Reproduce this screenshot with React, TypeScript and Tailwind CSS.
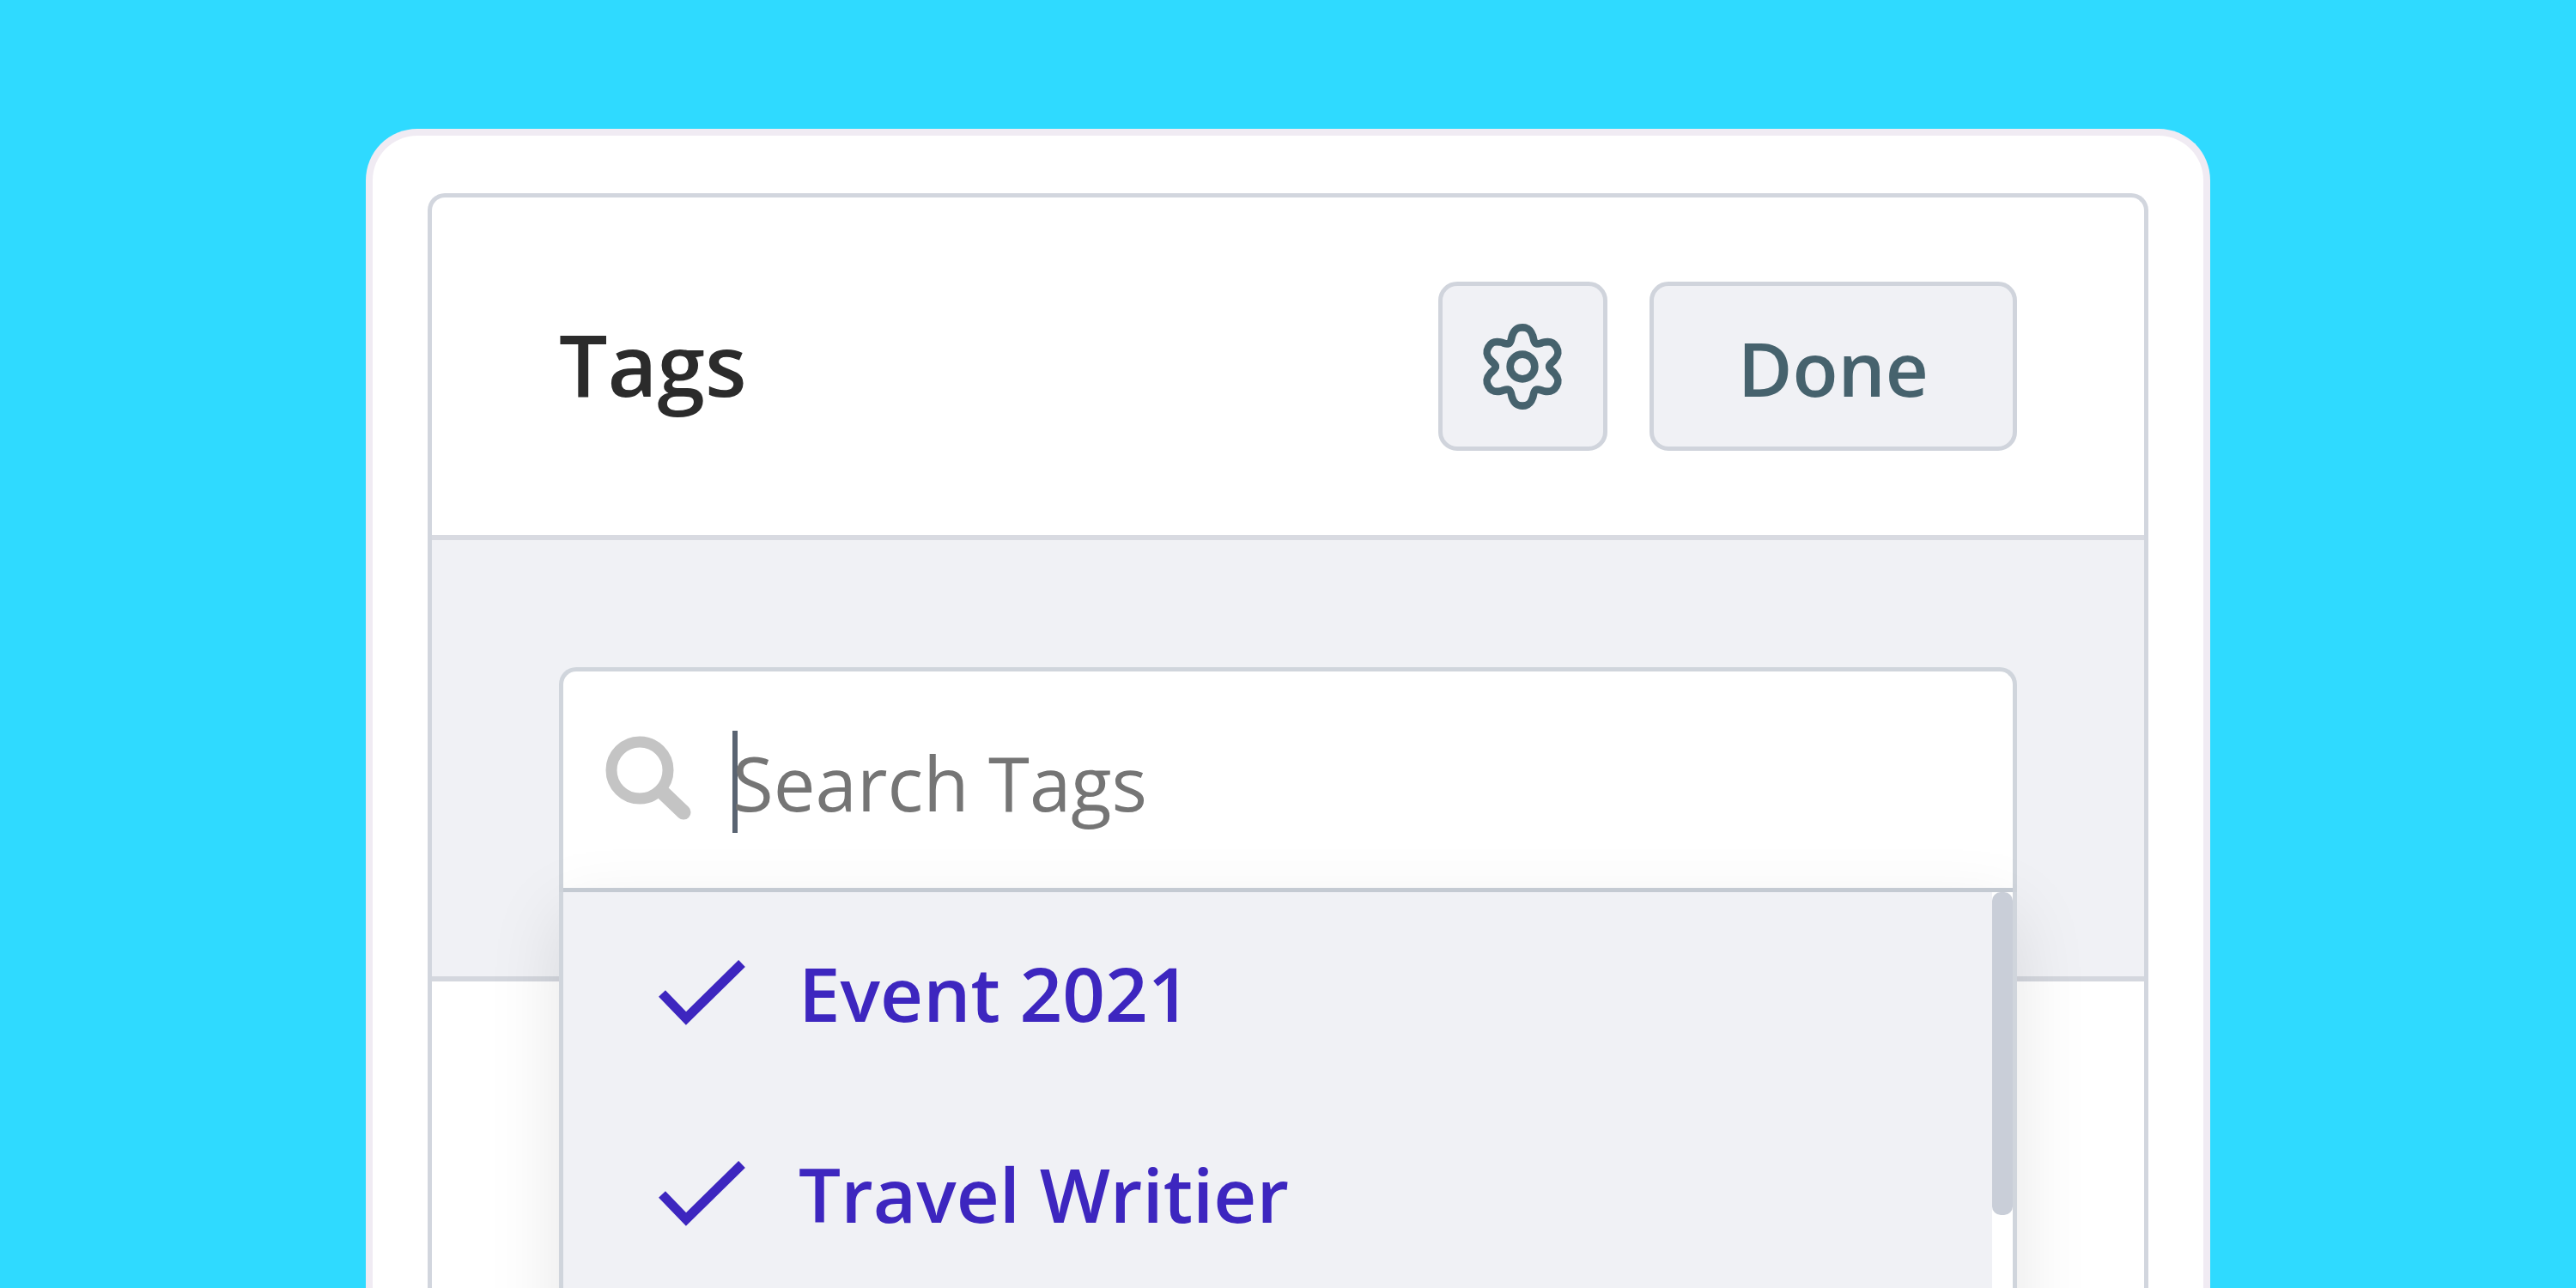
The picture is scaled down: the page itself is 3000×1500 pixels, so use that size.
import { useState } from "react";

const toothAngles = [0, 60, 120, 180, 240, 300];

function GearIcon() {
  return (
    <svg
      viewBox="-150 -150 300 300"
      className="w-[100px] h-[100px]"
      fill="none"
      stroke="currentColor"
      strokeWidth="26"
      strokeLinecap="round"
      aria-hidden="true"
    >
      {toothAngles.map((angle) => (
        <path
          key={angle}
          transform={`rotate(${angle})`}
          d="M-47 -81C-38 -87 -40 -97 -36 -108C-29 -129 -20 -137 0 -137C20 -137 29 -129 36 -108C40 -97 38 -87 47 -81"
        />
      ))}
      <circle r="43" />
    </svg>
  );
}

function SearchIcon() {
  return (
    <svg viewBox="0 0 100 108" className="w-[100px] h-[108px] shrink-0" fill="none" stroke="#c4c4c4" aria-hidden="true">
      <circle cx="40" cy="40" r="33" strokeWidth="13" />
      <path d="M68 67L91 89" strokeWidth="17" strokeLinecap="round" />
    </svg>
  );
}

function CheckIcon() {
  return (
    <svg
      viewBox="0 0 102 80"
      className="w-[102px] h-[80px] shrink-0 invisible peer-checked:visible"
      fill="none"
      stroke="currentColor"
      strokeWidth="11"
      aria-hidden="true"
    >
      <path d="M5 41L33 70L98 6" />
    </svg>
  );
}

export default function App() {
  const [query, setQuery] = useState("");
  const [selected, setSelected] = useState<string[]>(["Event 2021", "Travel Writier"]);

  const tags = ["Event 2021", "Travel Writier"];

  const toggleTag = (tag: string) => {
    setSelected((prev) => (prev.includes(tag) ? prev.filter((t) => t !== tag) : [...prev, tag]));
  };

  return (
    <main className="h-screen overflow-hidden flex flex-col items-center bg-[#2fdaff] pt-[150px] font-['Open_Sans',sans-serif]">
      <div className="w-[71.6%] flex-1 flex flex-col bg-white border-8 border-b-0 border-[#f0ebf3] rounded-t-[60px] px-16 pt-[67px]">
        <section className="flex-1 flex flex-col border-5 border-b-0 border-[#d2d6de] rounded-t-[20px]">
          {/* Header */}
          <header className="flex items-center justify-between px-[148px] py-[98px] border-b-6 border-[#d8dae1]">
            <h1 className="pb-2 text-[100px] leading-[140px] font-semibold text-[#2b2b2b]">Tags</h1>
            <div className="flex gap-[49px] text-[#46626d]">
              <button
                type="button"
                aria-label="Tag settings"
                className="w-[197px] h-[197px] flex items-center justify-center bg-[#f0f1f5] border-5 border-[#d0d4dc] rounded-[22px]"
              >
                <GearIcon />
              </button>
              <button
                type="button"
                className="px-[98px] pt-1 h-[197px] text-[87px] font-semibold bg-[#f0f1f5] border-5 border-[#d0d4dc] rounded-[22px]"
              >
                Done
              </button>
            </div>
          </header>

          {/* Search */}
          <div className="bg-[#f0f1f5] px-[148px] pt-[148px] pb-[98px] border-b-6 border-[#d4d7de]">
            <div className="relative">
              <div className="flex items-center h-[262px] pl-[49px] pr-12 bg-white border-5 border-b-0 border-[#d0d5dc] rounded-t-[20px]">
                <SearchIcon />
                <span className="w-[6px] h-[119px] ml-12 -mr-[6px] shrink-0 bg-[#5a6472]" />
                <input
                  type="text"
                  aria-label="Search Tags"
                  placeholder="Search Tags"
                  value={query}
                  onChange={(e) => setQuery(e.target.value)}
                  className="flex-1 min-w-0 text-[87px] leading-[124px] text-[#2b2b2b] placeholder:text-[#757575] outline-none"
                />
              </div>

              {/* Dropdown */}
              <div className="absolute top-full inset-x-0 h-[640px] flex bg-white border-5 border-t-0 border-[#d0d5dc] shadow-[0_24px_80px_rgba(0,0,0,0.1)]">
                <ul className="flex-1 bg-[#f0f1f5] border-t-5 border-[#c4cad2] -mt-[5px]">
                  {tags
                    .filter((tag) => tag.toLowerCase().includes(query.toLowerCase()))
                    .map((tag) => (
                      <li key={tag}>
                        <label className="h-[234px] flex items-center gap-[62px] pl-[110px] text-[87px] font-semibold text-[#3d26bf]">
                          <input
                            type="checkbox"
                            checked={selected.includes(tag)}
                            onChange={() => toggleTag(tag)}
                            className="peer sr-only"
                          />
                          <CheckIcon />
                          {tag}
                        </label>
                      </li>
                    ))}
                </ul>
                <div className="w-6 border-t-5 border-[#c4cad2] -mt-[5px]">
                  <div className="h-[376px] bg-[#c9ced8] rounded-[10px]" />
                </div>
              </div>
            </div>
          </div>
        </section>
      </div>
    </main>
  );
}
